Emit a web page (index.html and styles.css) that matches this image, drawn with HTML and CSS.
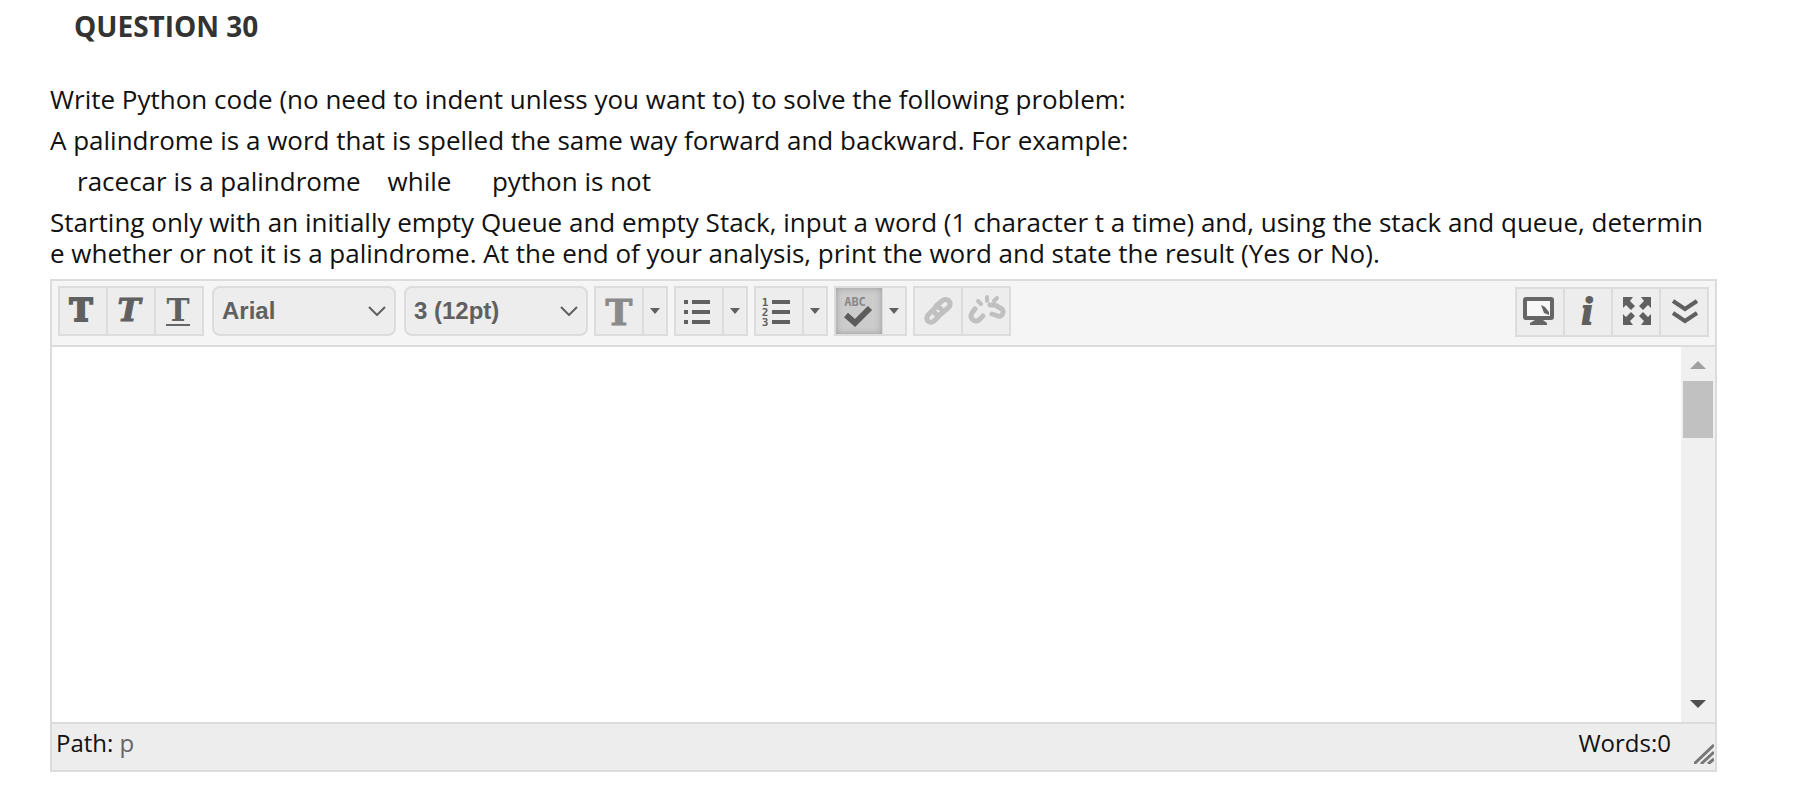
FILE: index.html
```
<!DOCTYPE html>
<html lang="en">
<head>
    <meta charset="UTF-8">
    <meta name="viewport" content="width=device-width, initial-scale=1.0">
    <title>Question 30</title>
    <link rel="stylesheet" href="styles.css">
</head>
<body>

    <h1>QUESTION 30</h1>

    <div class="question">
        <p>Write Python code (no need to indent unless you want to) to solve the following problem:</p>
        <p>A palindrome is a word that is spelled the same way forward and backward. For example:</p>
        <p>&nbsp;&nbsp;&nbsp; racecar is a palindrome&nbsp;&nbsp;&nbsp; while&nbsp;&nbsp;&nbsp;&nbsp;&nbsp; python is not</p>
        <p>Starting only with an initially empty Queue and empty Stack, input a word (1 character t a time) and, using the stack and queue, determine whether or not it is a palindrome. At the end of your analysis, print the word and state the result (Yes or No).</p>
    </div>

    <div class="editor">
        <div class="toolbar">
            <div class="group">
                <button type="button" aria-label="Bold">
                    <svg class="icon" viewBox="0 0 46 46"><text class="slab heavy" x="21" y="33" font-size="31">T</text></svg>
                </button>
                <button type="button" aria-label="Italic">
                    <svg class="icon" viewBox="0 0 46 46"><text class="slab slanted" x="21" y="33" font-size="31">T</text></svg>
                </button>
                <button type="button" aria-label="Underline">
                    <svg class="icon" viewBox="0 0 46 46"><text class="slab" x="22" y="33" font-size="31">T</text><path d="M10 37h24" stroke="#666" stroke-width="2"/></svg>
                </button>
            </div>

            <div class="select-box">
                <select aria-label="Font">
                    <option>Arial</option>
                </select>
                <svg class="chevron" viewBox="0 0 18 10"><path d="M1 1l8 8 8-8"/></svg>
            </div>
            <div class="select-box">
                <select aria-label="Font size">
                    <option>3 (12pt)</option>
                </select>
                <svg class="chevron" viewBox="0 0 18 10"><path d="M1 1l8 8 8-8"/></svg>
            </div>

            <div class="group">
                <button type="button" aria-label="Text color">
                    <svg class="icon" viewBox="0 0 46 46"><text class="slab pale" x="23" y="37" font-size="36">T</text></svg>
                </button>
                <button type="button" class="drop" aria-label="Text color options">
                    <svg class="caret" viewBox="0 0 10 6"><path d="M0 0h10L5 6z"/></svg>
                </button>
            </div>
            <div class="group">
                <button type="button" aria-label="Bullet list">
                    <svg class="icon" viewBox="0 0 46 46">
                        <path d="M8 12h4v4H8zM8 22h4v4H8zM8 32h4v4H8zM16 12h18v4H16zM16 22h18v4H16zM16 32h18v4H16z" fill="#606060"/>
                    </svg>
                </button>
                <button type="button" class="drop" aria-label="Bullet list options">
                    <svg class="caret" viewBox="0 0 10 6"><path d="M0 0h10L5 6z"/></svg>
                </button>
            </div>
            <div class="group">
                <button type="button" aria-label="Numbered list">
                    <svg class="icon" viewBox="0 0 46 46">
                        <text class="tiny" x="9" y="18">1</text>
                        <text class="tiny" x="9" y="28">2</text>
                        <text class="tiny" x="9" y="38">3</text>
                        <path d="M16 12h18v4H16zM16 22h18v4H16zM16 32h18v4H16z" fill="#606060"/>
                    </svg>
                </button>
                <button type="button" class="drop" aria-label="Numbered list options">
                    <svg class="caret" viewBox="0 0 10 6"><path d="M0 0h10L5 6z"/></svg>
                </button>
            </div>
            <div class="group">
                <button type="button" class="pressed" aria-label="Spell check" aria-pressed="true">
                    <svg class="icon" viewBox="0 0 46 46">
                        <text class="abc" x="19" y="18">ABC</text>
                        <path d="M10 27l9 8L34 20" fill="none" stroke="#5c5c5c" stroke-width="6"/>
                    </svg>
                </button>
                <button type="button" class="drop" aria-label="Spell check options">
                    <svg class="caret" viewBox="0 0 10 6"><path d="M0 0h10L5 6z"/></svg>
                </button>
            </div>
            <div class="group">
                <button type="button" aria-label="Insert link">
                    <svg class="icon" viewBox="0 0 46 46">
                        <g fill="none" stroke="#c0c0c0" stroke-width="5" stroke-linecap="round" stroke-linejoin="round">
                            <path d="M21 18l6-5a4 4 0 0 1 7 6l-8 7a4 4 0 0 1-6-1"/>
                            <path d="M24 28l-5 5a4 4 0 0 1-6-6l7-7a4 4 0 0 1 6 1"/>
                        </g>
                    </svg>
                </button>
                <button type="button" aria-label="Remove link">
                    <svg class="icon" viewBox="0 0 46 46">
                        <g fill="none" stroke="#c0c0c0" stroke-width="5" stroke-linecap="round" stroke-linejoin="round">
                            <path d="M12 21l-3 4a5 5 0 0 0 7 7l4-4"/>
                            <path d="M27 17h5l5 3a4 4 0 0 1-2 8l-6-2"/>
                            <path d="M15 13l3 3M24 9v4M34 10l-3 3" stroke-width="4"/>
                        </g>
                    </svg>
                </button>
            </div>

            <div class="group right">
                <button type="button" aria-label="Preview">
                    <svg class="icon" viewBox="0 0 46 46">
                        <rect x="8" y="10" width="27" height="19" rx="1" fill="#f8f8f8" stroke="#666" stroke-width="4"/>
                        <path d="M18 31h8l4 3v2H13v-2z" fill="#666"/>
                        <path d="M24 16l4 2 4 5v3l-5-2z" fill="#666"/>
                    </svg>
                </button>
                <button type="button" aria-label="Help">
                    <svg class="icon" viewBox="0 0 46 46"><text class="info" x="22" y="35">i</text></svg>
                </button>
                <button type="button" aria-label="Full screen">
                    <svg class="icon" viewBox="0 0 46 46">
                        <path id="arrow" d="M10 8h10l-3 4 5 5-4 4-5-5-3 3z" fill="#606060"/>
                        <use href="#arrow" transform="matrix(-1 0 0 1 48 0)"/>
                        <use href="#arrow" transform="matrix(1 0 0 -1 0 44)"/>
                        <use href="#arrow" transform="matrix(-1 0 0 -1 48 44)"/>
                    </svg>
                </button>
                <button type="button" aria-label="Show more">
                    <svg class="icon" viewBox="0 0 46 46">
                        <path d="M12 12l12 8 12-8M12 24l12 8 12-8" fill="none" stroke="#606060" stroke-width="4"/>
                    </svg>
                </button>
            </div>
        </div>

        <div class="content">
            <textarea aria-label="Answer"></textarea>
            <div class="scrollbar">
                <svg class="scroll-up" viewBox="0 0 16 8"><path d="M0 8h16L8 0z"/></svg>
                <div class="thumb"></div>
                <svg class="scroll-down" viewBox="0 0 16 8"><path d="M0 0h16L8 8z"/></svg>
            </div>
        </div>

        <div class="status">
            <span>Path: <a href="#">p</a></span>
            <span class="words">Words:0</span>
            <svg class="grip" viewBox="0 0 20 20">
                <path d="M0 20L20 1M7 20L20 8M14 20l6-5"/>
            </svg>
        </div>
    </div>

</body>
</html>
```

FILE: styles.css
```
* {
    box-sizing: border-box;
}
body {
    margin: 0;
    padding: 8px 81px 30px 50px;
    background-color: white;
    color: #111;
    font-family: "Open Sans", sans-serif;
    font-size: 26px;
    line-height: 31px;
}
h1 {
    margin: 0 0 40px 24px;
    font-size: 28px;
    line-height: 36px;
    color: #333;
}
.question p {
    margin: 0 0 10px;
    word-break: break-all;
}
.editor {
    border: 2px solid #dcdcdc;
}
.toolbar {
    display: flex;
    gap: 6px;
    height: 66px;
    padding: 5px 6px;
    background-color: #f5f5f5;
    border-bottom: 2px solid #dcdcdc;
}
.group {
    display: flex;
    height: 50px;
    border: 2px solid #dcdcdc;
    background-color: #ededed;
}
.group button {
    width: 46px;
    height: 46px;
    padding: 0;
    border: none;
    background: none;
    cursor: pointer;
}
.group button + button {
    width: 48px;
    border-left: 2px solid #dcdcdc;
}
.group button.drop {
    width: 24px;
}
.group button.pressed {
    background-color: #ccc;
    box-shadow: inset 0 0 6px #999;
}
.group button.pressed + .drop {
    width: 23px;
    border-left-width: 1px;
}
.group.right {
    margin: 1px 0 0 auto;
}
.icon {
    display: block;
    width: 46px;
    height: 46px;
}
.icon text {
    fill: #606060;
    text-anchor: middle;
}
.icon .slab {
    font-family: "DejaVu Serif", serif;
    font-weight: bold;
}
.icon .heavy {
    stroke: #606060;
    stroke-width: 2px;
}
.icon .slanted {
    font-style: italic;
    stroke: #606060;
    stroke-width: 1px;
}
.icon .pale {
    fill: #8a8a8a;
    stroke: #8a8a8a;
    stroke-width: 1px;
}
.icon .tiny {
    font: bold 11px "DejaVu Sans Mono", monospace;
}
.icon .abc {
    font: bold 12px "DejaVu Sans Mono", monospace;
    fill: #888;
}
.icon .info {
    font: italic bold 38px "Liberation Serif", serif;
    stroke: #606060;
    stroke-width: 2px;
}
.caret {
    display: block;
    width: 10px;
    height: 6px;
    margin: 0 auto;
    fill: #606060;
}
.select-box {
    position: relative;
    width: 184px;
    height: 50px;
    margin-left: 2px;
}
.select-box select {
    appearance: none;
    width: 100%;
    height: 100%;
    padding: 0 30px 2px 8px;
    border: 2px solid #dcdcdc;
    border-radius: 8px;
    background-color: #ededed;
    color: #606060;
    font: bold 24px "Liberation Sans", Arial, sans-serif;
}
.chevron {
    position: absolute;
    top: 20px;
    right: 10px;
    width: 18px;
    height: 10px;
    fill: none;
    stroke: #606060;
    stroke-width: 2px;
    pointer-events: none;
}
.content {
    display: flex;
    height: 375px;
}
textarea {
    flex: 1;
    padding: 10px;
    border: none;
    outline: none;
    resize: none;
    font: 24px "Liberation Sans", Arial, sans-serif;
}
.scrollbar {
    display: flex;
    flex-direction: column;
    align-items: center;
    width: 34px;
    padding: 14px 2px;
    background-color: #f0f0f0;
}
.scrollbar svg {
    width: 16px;
    height: 8px;
}
.scroll-up {
    fill: #a0a0a0;
}
.scroll-down {
    margin-top: auto;
    fill: #505050;
}
.thumb {
    width: 30px;
    height: 57px;
    margin-top: 12px;
    background-color: #c1c1c1;
}
.status {
    display: flex;
    align-items: center;
    height: 48px;
    padding: 0 1px 6px 4px;
    border-top: 2px solid #dcdcdc;
    background-color: #ededed;
    font-size: 24px;
}
.status span {
    padding-bottom: 3px;
}
.status a {
    color: #666;
    text-decoration: none;
}
.words {
    margin-left: auto;
}
.grip {
    align-self: flex-end;
    width: 20px;
    height: 20px;
    margin-left: 23px;
    fill: none;
    stroke: #777;
    stroke-width: 3px;
}
```
